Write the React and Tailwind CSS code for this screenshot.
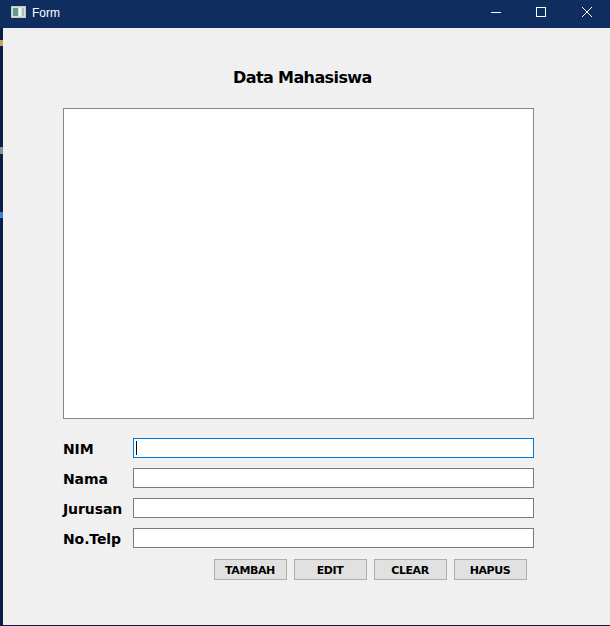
import React from "react";

const fields = ["NIM", "Nama", "Jurusan", "No.Telp"];
const buttons = ["TAMBAH", "EDIT", "CLEAR", "HAPUS"];

function AppIcon() {
  return (
    <svg width="15" height="12" viewBox="0 0 15 12" className="shrink-0">
      <rect x="0.5" y="0.5" width="14" height="11" fill="#d9dde0" stroke="#c4c8cc" />
      <rect x="2" y="2" width="5" height="8" fill="#5f9a8c" />
      <rect x="8" y="2" width="2" height="8" fill="#f2f4f4" />
      <rect x="11" y="2" width="2" height="8" fill="#a9c4bd" />
    </svg>
  );
}

export default function App() {
  return (
    <div className="w-[610px] h-[626px] flex flex-col bg-[#102d5f] font-['DejaVu_Sans',sans-serif] overflow-hidden">
      {/* title bar */}
      <div className="h-[28px] shrink-0 flex items-center text-white">
        <div className="flex items-center gap-[6px] pl-[11px] pb-[4px] flex-1">
          <AppIcon />
          <span className="text-[12px] pt-[2px] font-['Liberation_Sans',sans-serif]">Form</span>
        </div>
        <div className="flex items-center h-full pb-[4px]">
          <div className="w-[44px] h-full flex items-center justify-center">
            <svg width="10" height="10" viewBox="0 0 10 10">
              <path d="M0 5.5H10" stroke="#fff" />
            </svg>
          </div>
          <div className="w-[46px] h-full flex items-center justify-center">
            <svg width="10" height="10" viewBox="0 0 10 10">
              <rect x="0.5" y="0.5" width="9" height="9" fill="none" stroke="#fff" />
            </svg>
          </div>
          <div className="w-[46px] h-full flex items-center justify-center">
            <svg width="10" height="10" viewBox="0 0 10 10">
              <path d="M0 0L10 10M10 0L0 10" stroke="#fff" />
            </svg>
          </div>
        </div>
      </div>

      <div className="flex-1 flex bg-[#0b1f45]">
        {/* desktop showing through on the left edge */}
        <div className="w-[3px] shrink-0 flex flex-col">
          <div className="h-[12px]"></div>
          <div className="h-[6px] bg-[#c9a06a]"></div>
          <div className="h-[101px]"></div>
          <div className="h-[7px] bg-[#8a8f96]"></div>
          <div className="h-[58px]"></div>
          <div className="h-[6px] bg-[#3f7fe0]"></div>
        </div>

        {/* window body */}
        <div className="flex-1 mb-[1px] bg-[#f0f0f0] pl-[60px] pr-[76px] flex flex-col">
          <h1 className="mt-[39px] h-[21px] leading-[21px] ml-[170px] text-[16px] font-bold text-black whitespace-nowrap tracking-[-0.6px]">
            Data Mahasiswa
          </h1>

          <div className="mt-[20px] h-[311px] bg-white border border-[#828790]"></div>

          <div className="mt-[19px] flex flex-col gap-[10px]">
            {fields.map((label, i) => (
              <div key={label} className="flex items-center h-[20px]">
                <label className="w-[70px] shrink-0 pt-[2px] text-[14px] font-bold text-black whitespace-nowrap tracking-[-0.1px]">
                  {label}
                </label>
                <div
                  className={
                    i === 0
                      ? "flex-1 h-full bg-white border border-[#0078d7] flex items-center pl-[2px]"
                      : "flex-1 h-full bg-white border border-[#7a7a7a]"
                  }
                >
                  {i === 0 && <div className="w-[1px] h-[14px] bg-black"></div>}
                </div>
              </div>
            ))}
          </div>

          <div className="mt-[11px] ml-[151px] flex gap-[7px]">
            {buttons.map((b) => (
              <button
                key={b}
                className="w-[73px] h-[21px] pt-[3px] pr-[1px] bg-[#e1e1e1] border border-[#adadad] text-[11px] font-bold text-black tracking-[-0.4px] flex items-center justify-center"
              >
                {b}
              </button>
            ))}
          </div>
        </div>
      </div>
    </div>
  );
}
